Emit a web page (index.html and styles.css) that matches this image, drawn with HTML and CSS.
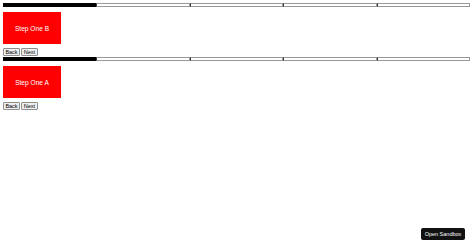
FILE: index.html
```html
<!DOCTYPE html>
<html>
<head>
<meta charset="utf-8">
<link rel="stylesheet" href="styles.css">
</head>
<body>
<div class="wizard">
  <div class="progress">
    <div class="seg done"></div>
    <div class="seg"></div>
    <div class="seg"></div>
    <div class="seg"></div>
    <div class="seg"></div>
  </div>
  <div class="step">Step One B</div>
  <div class="nav"><button class="btn">Back</button><button class="btn">Next</button></div>
</div>
<div class="wizard">
  <div class="progress">
    <div class="seg done"></div>
    <div class="seg"></div>
    <div class="seg"></div>
    <div class="seg"></div>
    <div class="seg"></div>
  </div>
  <div class="step">Step One A</div>
  <div class="nav"><button class="btn">Back</button><button class="btn">Next</button></div>
</div>
<button class="sandbox">Open Sandbox</button>
</body>
</html>
```
FILE: styles.css
```css
html, body { height: 100%; }
body {
  margin: 0;
  padding: 3px;
  box-sizing: border-box;
  font-family: "Liberation Sans", Arial, sans-serif;
  background: #fff;
}
.wizard { display: flex; flex-direction: column; align-items: flex-start; }
.progress {
  display: flex;
  width: 467px;
  height: 4px;
}
.seg {
  flex: 1;
  box-sizing: border-box;
  border: 1px solid #999;
  border-left-color: #333;
  background: #fff;
}
.seg.done { background: #000; border-color: #000; }
.step {
  margin-top: 5px;
  width: 58px;
  height: 32px;
  background: #ff0000;
  color: #fff;
  font-size: 6.6px;
  display: flex;
  align-items: center;
  justify-content: center;
}
.nav { display: flex; gap: 1px; margin-top: 4px; margin-bottom: 1px; }
.btn {
  font-family: "Liberation Sans", Arial, sans-serif;
  font-size: 5.5px;
  width: 17px;
  height: 8px;
  padding: 0;
  margin: 0;
  border: 1px solid #8f8f8f;
  border-radius: 1px;
  background: #efefef;
  color: #000;
  line-height: 6px;
}
.sandbox {
  position: fixed;
  right: 9px;
  bottom: 8px;
  width: 44px;
  background: #111;
  color: #fff;
  border: none;
  border-radius: 2px;
  font-family: "Liberation Sans", Arial, sans-serif;
  font-size: 5.5px;
  padding: 0;
  height: 12px;
}
```
